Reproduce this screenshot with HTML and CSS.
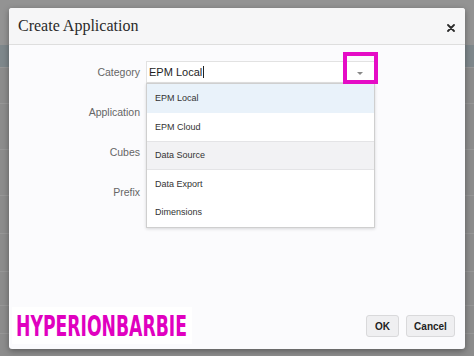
FILE: index.html
```html
<!DOCTYPE html>
<html lang="en">
<head>
  <meta charset="UTF-8">
  <meta name="viewport" content="width=device-width, initial-scale=1.0">
  <title>Create Application</title>
  <link rel="stylesheet" href="styles.css">
</head>
<body>
  <div class="backdrop">
    <div class="bg-row bg-top"></div>
    <div class="bg-row bg-band"></div>
    <div class="bg-row" style="height:35px"></div>
    <div class="bg-row" style="height:45px"></div>
    <div class="bg-row" style="height:45px"></div>
    <div class="bg-row" style="height:37px"></div>
    <div class="bg-row" style="height:37px"></div>
    <div class="bg-row" style="height:33px"></div>
    <div class="bg-row" style="height:27px"></div>
  </div>

  <div class="dialog">
    <div class="dialog-header">
      <h1>Create Application</h1>
      <svg class="close" width="8" height="8" viewBox="0 0 8 8">
        <path d="M1 1L7 7M7 1L1 7" stroke="#2b2b2b" stroke-width="1.8" stroke-linecap="round"/>
      </svg>
    </div>

    <div class="dialog-body">
      <div class="form">
        <label>Category</label>
        <div class="field active">
          <span class="value">EPM Local</span><span class="caret"></span>
          <span class="arrow"></span>
          <span class="highlight"></span>
          <ul class="menu">
            <li class="selected">EPM Local</li>
            <li>EPM Cloud</li>
            <li class="hover">Data Source</li>
            <li>Data Export</li>
            <li>Dimensions</li>
          </ul>
        </div>

        <label>Application</label>
        <div class="field"></div>

        <label>Cubes</label>
        <div class="field"></div>

        <label>Prefix</label>
        <div class="field"></div>
      </div>
    </div>

    <div class="dialog-footer">
      <button class="btn btn-ok">OK</button>
      <button class="btn btn-cancel">Cancel</button>
    </div>

    <div class="watermark"><span>HYPERIONBARBIE</span></div>
  </div>
</body>
</html>
```

FILE: styles.css
```css
body {
  margin: 0;
  width: 474px;
  height: 356px;
  overflow: hidden;
  background-color: #8c8c8c;
  font-family: "Liberation Sans", Arial, sans-serif;
  position: relative;
}
.backdrop {
  display: flex;
  flex-direction: column;
}
.bg-row {
  border-bottom: 1px solid #979797;
}
.bg-top {
  height: 45px;
  background-color: #939393;
  border-bottom: none;
}
.bg-band {
  height: 22px;
  background-color: #7e878b;
}
.dialog {
  position: absolute;
  left: 9px;
  top: 8px;
  width: 456px;
  height: 341px;
  background-color: #fbfbfd;
  border-radius: 3px;
  box-shadow: 0 2px 6px rgba(0, 0, 0, 0.35);
  display: flex;
  flex-direction: column;
}
.dialog-header {
  height: 36px;
  background-color: #f6f6f7;
  border-bottom: 1px solid #dedede;
  border-radius: 3px 3px 0 0;
  display: flex;
  align-items: center;
  justify-content: space-between;
  padding: 0 10px 0 9px;
}
.dialog-header h1 {
  margin: 0;
  font-family: "Liberation Serif", "Times New Roman", serif;
  font-weight: normal;
  font-size: 16px;
  color: #2a2a2a;
}
.close {
  margin-top: 3px;
}
.dialog-body {
  flex: 1;
  padding-top: 16px;
}
.form {
  display: grid;
  grid-template-columns: 131px 229px;
  grid-auto-rows: 22px;
  column-gap: 6px;
  row-gap: 18px;
}
.form label {
  text-align: right;
  font-size: 10.5px;
  color: #666;
  line-height: 22px;
}
.field {
  position: relative;
  box-sizing: border-box;
  border: 1px solid #e2e2e2;
  background-color: #fff;
  display: flex;
  align-items: center;
  padding-left: 2px;
}
.value {
  font-size: 11px;
  color: #1e1e1e;
}
.caret {
  width: 1px;
  height: 12px;
  background-color: #222;
  margin-left: 1px;
}
.arrow {
  position: absolute;
  right: 11px;
  top: 10px;
  width: 0;
  height: 0;
  border-left: 3px solid transparent;
  border-right: 3px solid transparent;
  border-top: 3px solid #888;
}
.highlight {
  position: absolute;
  left: 196px;
  top: -10px;
  width: 35px;
  height: 32px;
  box-sizing: border-box;
  border: 4px solid #e50cc6;
  z-index: 3;
}
.menu {
  position: absolute;
  left: -1px;
  top: 21px;
  width: 229px;
  box-sizing: border-box;
  margin: 0;
  padding: 0;
  list-style: none;
  background-color: #fff;
  border: 1px solid #cfcfcf;
  box-shadow: 0 1px 3px rgba(0, 0, 0, 0.15);
  z-index: 2;
}
.menu li {
  height: 28.6px;
  line-height: 28.6px;
  padding-left: 8px;
  font-size: 9px;
  color: #333;
}
.menu .selected {
  background-color: #e9f2fa;
}
.menu .hover {
  background-color: #f2f2f4;
  border-top: 1px solid #e4e4e6;
  border-bottom: 1px solid #e4e4e6;
  height: 26.6px;
  line-height: 26.6px;
}
.dialog-footer {
  display: flex;
  justify-content: flex-end;
  gap: 7px;
  padding: 0 10px 12px;
}
.btn {
  height: 22px;
  box-sizing: border-box;
  border: 1px solid #d9d9db;
  border-radius: 3px;
  background-color: #efeff1;
  font-family: "Liberation Sans", Arial, sans-serif;
  font-weight: bold;
  font-size: 10px;
  color: #222;
  padding: 0;
}
.btn-ok { width: 33px; }
.btn-cancel { width: 49px; }
.watermark {
  position: absolute;
  left: 3px;
  bottom: 5px;
  width: 180px;
  height: 37px;
  background-color: #fff;
  overflow: hidden;
}
.watermark span {
  display: inline-block;
  margin-left: 4px;
  margin-top: 1px;
  font-family: "DejaVu Sans Condensed", "DejaVu Sans", sans-serif;
  font-stretch: condensed;
  font-weight: bold;
  font-size: 29px;
  line-height: 36px;
  color: #e000c0;
  transform: scaleX(0.66);
  transform-origin: left center;
  white-space: nowrap;
}
```
